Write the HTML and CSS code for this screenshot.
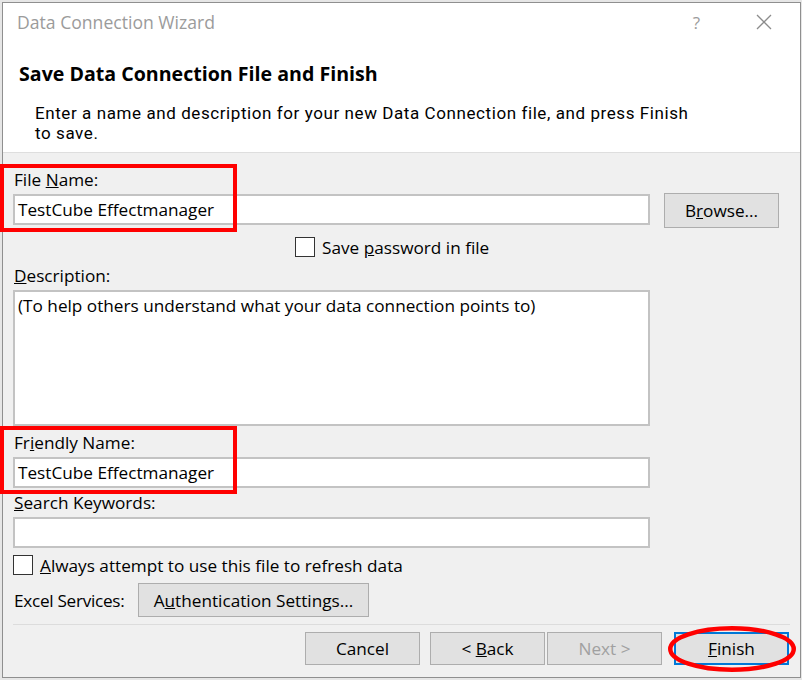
FILE: index.html
```html
<!DOCTYPE html>
<html>
<head>
<meta charset="utf-8">
<title>Data Connection Wizard</title>
<link rel="stylesheet" href="styles.css">
</head>
<body>
<div class="window">
  <div class="header">
    <div class="titlebar">
      <span class="title">Data Connection Wizard</span>
      <span class="help">?</span>
      <svg class="close" width="16" height="16" viewBox="0 0 16 16"><path d="M1 1 L15 15 M15 1 L1 15" stroke="#8c8c8c" stroke-width="1.3" fill="none"/></svg>
    </div>
    <h1 class="heading">Save Data Connection File and Finish</h1>
    <div class="intro">
      <div class="intro-line">Enter a name and description for your new Data Connection file, and press Finish</div>
      <div class="intro-line">to save.</div>
    </div>
  </div>
  <div class="content">
    <div class="label file">File <u>N</u>ame:</div>
    <div class="field-row">
      <div class="textbox">TestCube Effectmanager</div>
      <div class="btn browse"><span>B<u>r</u>owse...</span></div>
    </div>
    <div class="check-row save-pw">
      <span class="checkbox"></span><span>Save <u>p</u>assword in file</span>
    </div>
    <div class="label desc"><u>D</u>escription:</div>
    <div class="textarea">(To help others understand what your data connection points to)</div>
    <div class="label friendly">Fr<u>i</u>endly Name:</div>
    <div class="textbox">TestCube Effectmanager</div>
    <div class="label search"><u>S</u>earch Keywords:</div>
    <div class="textbox"></div>
    <div class="check-row refresh">
      <span class="checkbox"></span><span><u>A</u>lways attempt to use this file to refresh data</span>
    </div>
    <div class="services-row">
      <span class="services-label">Excel Services:</span>
      <div class="btn auth"><span>A<u>u</u>thentication Settings...</span></div>
    </div>
  </div>
  <div class="footer">
    <div class="btn"><span>Cancel</span></div>
    <div class="btn back"><span>&lt; <u>B</u>ack</span></div>
    <div class="btn disabled"><span>Next &gt;</span></div>
    <div class="btn finish"><span><u>F</u>inish</span></div>
  </div>
  <div class="highlight box-file"></div>
  <div class="highlight box-friendly"></div>
  <svg class="ellipse" width="132" height="50" viewBox="0 0 132 50"><ellipse cx="64" cy="23" rx="61.75" ry="20.75" stroke="#ff0000" stroke-width="4.5" fill="none"/></svg>
</div>
</body>
</html>
```
FILE: styles.css
```css
html, body {
  margin: 0;
  padding: 0;
}
body {
  background: #e6e6e6;
  width: 802px;
  height: 680px;
  overflow: hidden;
  font-family: "Open Sans", "Noto Sans", sans-serif;
  font-size: 17.2px;
  color: #000;
}
.window {
  position: relative;
  margin: 2px 0 0 2px;
  width: 797px;
  height: 674px;
  border: 1px solid #8f8f8f;
  background: #f0f0f0;
  display: flex;
  flex-direction: column;
}
.header {
  background: #fff;
  height: 150px;
  border-bottom: 1px solid #dedede;
  box-sizing: border-box;
}
.titlebar {
  height: 42px;
  display: flex;
  align-items: center;
  padding-left: 14px;
}
.title {
  flex: 1;
  color: #9b9b9b;
  font-size: 17.6px;
  margin-top: -4px;
}
.help {
  color: #9b9b9b;
  font-size: 17px;
  margin-right: 56px;
  margin-top: -4px;
}
.close {
  margin-right: 28px;
  margin-top: -4px;
}
.heading {
  margin: 17px 0 0 16px;
  font-size: 19.6px;
  font-weight: bold;
  line-height: 24px;
}
.intro {
  margin: 17px 0 0 32px;
  font-family: Roboto, "Open Sans", sans-serif;
  font-size: 17px;
  letter-spacing: 0.58px;
}
.intro-line {
  height: 20px;
  line-height: 20px;
}
.content {
  padding: 0 0 0 10px;
  display: flex;
  flex-direction: column;
  align-items: flex-start;
}
.label {
  line-height: 20px;
  margin: 9px 0 4px 1px;
}
.label.file {
  margin-top: 17px;
}
.label.desc {
  margin-top: 9px;
}
.label.friendly {
  margin-top: 7px;
}
.label.search {
  margin-top: 5px;
}
.field-row {
  display: flex;
  align-items: flex-start;
  gap: 14px;
}
.textbox {
  width: 630px;
  height: 27px;
  background: #fff;
  border: 2px solid #c3c3c3;
  padding: 0 0 0 3px;
  line-height: 27px;
  white-space: nowrap;
}
.textarea {
  width: 630px;
  height: 128px;
  background: #fff;
  border: 2px solid #c3c3c3;
  padding: 4px 0 0 3px;
  line-height: 20px;
}
.btn {
  width: 113px;
  height: 31px;
  border: 1px solid #adadad;
  background: #e1e1e1;
  display: flex;
  align-items: center;
  justify-content: center;
  white-space: pre;
}
.browse {
  margin-top: -1px;
  height: 33px;
}
.check-row {
  display: flex;
  align-items: center;
  height: 20px;
}
.save-pw {
  margin: 9px 0 0 282px;
}
.refresh {
  margin: 7px 0 0 0;
}
.checkbox {
  width: 18px;
  height: 18px;
  border: 1px solid #333;
  background: #fff;
  margin-right: 7px;
}
.services-row {
  display: flex;
  align-items: center;
  margin-top: 8px;
  margin-left: 1px;
}
.services-label {
  width: 124px;
  letter-spacing: -0.3px;
}
.auth {
  width: 229px;
  height: 32px;
}
.footer {
  margin: 7px 10px 0 10px;
  border-top: 1px solid #dcdcdc;
  padding-top: 7px;
  display: flex;
  justify-content: flex-end;
  gap: 10px;
}
.footer .back {
  margin-right: -8px;
}
.footer .disabled {
  color: #a0a0a0;
  margin-right: 2px;
}
.footer .finish {
  border: 2px solid #0078d7;
  width: 111px;
  height: 29px;
  margin-right: 1px;
}
.highlight {
  position: absolute;
  border: 4px solid #ff0000;
  width: 229px;
  height: 60px;
  left: -3px;
}
.box-file {
  top: 161px;
}
.box-friendly {
  top: 423px;
}
.ellipse {
  position: absolute;
  left: 665px;
  top: 623px;
}
```
